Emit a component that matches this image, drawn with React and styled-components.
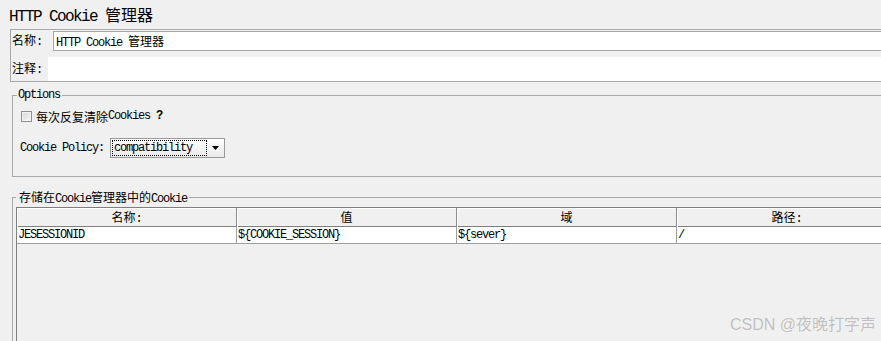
import React from 'react'
import styled, {createGlobalStyle} from 'styled-components';

const GlobalStyle = createGlobalStyle`
    html, body {
        margin: 0;
        padding: 0;
        background: #f0f0f0;
        overflow: hidden;
    }
    body {
        font-family: "Liberation Mono", "Noto Sans CJK SC", monospace;
        font-size: 12px;
        letter-spacing: -1.2px;
        color: #000;
    }
`;
const Page = styled.div`
    position: relative;
    width: 881px;
    height: 341px;
    overflow: hidden;
`;
const Han = styled.span`
    font-family: "Noto Sans CJK SC", sans-serif;
    letter-spacing: 0;
`;
const Title = styled.div`
    height: 29px;
    line-height: 29px;
    padding-left: 9px;
    font-size: 16px;
    letter-spacing: -1.6px;
    white-space: pre;
`;
const Panel = styled.div`
    margin-left: 10px;
    border: 1px solid #a8a8a8;
    border-right: none;
    display: flex;
    flex-direction: column;
`;
const FieldRow = styled.div`
    display: flex;
    align-items: center;
    height: ${p => p.h}px;
    margin-top: ${p => p.top}px;
`;
const Label = styled.div`
    width: ${p => p.w}px;
    padding-left: 1px;
    line-height: 16px;
    flex: none;
`;
const TextInput = styled.div`
    flex: 1;
    align-self: stretch;
    background: #fff;
    border: 1px solid #a5a5a5;
    border-right: none;
    padding-left: 2px;
    line-height: 18px;
    white-space: pre;
`;
const Area = styled.div`
    flex: 1;
    align-self: stretch;
    background: #fff;
`;
const Group = styled.fieldset`
    margin: ${p => p.top}px -10px 0 12px;
    padding: ${p => p.pad};
    border: 1px solid #a8a8a8;
    min-width: 0;
    height: ${p => p.h ? p.h + 'px' : 'auto'};
`;
const Legend = styled.legend`
    padding: 0 2px 0 ${p => p.pl}px;
    margin-left: ${p => p.ml}px;
    line-height: 14px;
    height: 14px;
    white-space: pre;
`;
const OptionRow = styled.div`
    display: flex;
    align-items: center;
    height: 20px;
    margin-top: ${p => p.top || 0}px;
    padding-left: ${p => p.pl || 0}px;
    white-space: pre;
`;
const CheckBox = styled.span`
    width: 9px;
    height: 9px;
    border: 1px solid #8e8f8f;
    background: linear-gradient(135deg, #d8d8d8, #f7f7f7);
    box-shadow: inset 0 0 0 1px #f4f4f4;
    margin-right: 4px;
    flex: none;
`;
const Help = styled.span`
    font-weight: bold;
`;
const Select = styled.div`
    display: flex;
    align-items: stretch;
    width: 113px;
    height: 18px;
    margin-left: 6px;
    border: 1px solid #9a9a9a;
    background: linear-gradient(#fdfdfd, #eaeaea);
`;
const SelectValue = styled.div`
    flex: 1;
    margin: 1px 0 1px 1px;
    border: 1px dotted #000;
    padding-left: 1px;
    line-height: 14px;
`;
const Arrow = styled.div`
    width: 17px;
    display: flex;
    align-items: center;
    justify-content: center;
`;
const Table = styled.div`
    width: 900px;
    height: 200px;
    border-left: 1px solid #7f7f7f;
    border-top: 1px solid #7f7f7f;
`;
const Row = styled.div`
    display: grid;
    grid-template-columns: repeat(4, 220px);
    height: ${p => p.h}px;
    background: ${p => p.head ? '#f0f0f0' : '#fff'};
    border-bottom: 1px solid ${p => p.head ? '#7f7f7f' : '#a0a0a0'};
`;
const HeadCell = styled.div`
    border-right: 1px solid #8c8c8c;
    box-shadow: inset 1px 1px 0 #fff;
    text-align: center;
    line-height: 18px;
`;
const Cell = styled.div`
    border-right: 1px solid #a0a0a0;
    padding-left: 1px;
    line-height: 16px;
    white-space: pre;
`;
const Watermark = styled.div`
    position: absolute;
    right: 5px;
    bottom: 6px;
    font-family: "Liberation Sans", "Noto Sans CJK SC", sans-serif;
    font-size: 16px;
    letter-spacing: 0;
    color: rgba(140, 140, 140, 0.55);
    text-shadow: 0 0 1px rgba(255, 255, 255, 0.8);
`;

const headers = [['名称', ':'], ['值', ''], ['域', ''], ['路径', ':']];
const cookies = [['JESESSIONID', '${COOKIE_SESSION}', '${sever}', '/']];

function App() {
    return (
        <Page>
            <GlobalStyle/>
            <Title>HTTP Cookie <Han>管理器</Han></Title>
            <Panel>
                <FieldRow h={20} top={1}>
                    <Label w={41}><Han>名称</Han>:</Label>
                    <TextInput>HTTP Cookie <Han>管理器</Han></TextInput>
                </FieldRow>
                <FieldRow h={24} top={6}>
                    <Label w={36}><Han>注释</Han>:</Label>
                    <Area/>
                </FieldRow>
            </Panel>
            <Group top={6} pad="4px 0 18px 7px">
                <Legend ml={-3} pl={1}>Options</Legend>
                <OptionRow pl={1}>
                    <CheckBox/>
                    <Han>每次反复清除</Han>Cookies <Help>?</Help>
                </OptionRow>
                <OptionRow top={12}>
                    Cookie Policy:
                    <Select>
                        <SelectValue>compatibility</SelectValue>
                        <Arrow>
                            <svg width="7" height="4" viewBox="0 0 7 4">
                                <path d="M0 0 H7 L3.5 4 Z" fill="#000"/>
                            </svg>
                        </Arrow>
                    </Select>
                </OptionRow>
            </Group>
            <Group top={13} pad="3px 0 0 3px" h={180}>
                <Legend ml={0} pl={3}><Han>存储在</Han>Cookie<Han>管理器中的</Han>Cookie</Legend>
                <Table>
                    <Row head h={18}>
                        {headers.map(([h, c]) => (
                            <HeadCell key={h}><Han>{h}</Han>{c}</HeadCell>
                        ))}
                    </Row>
                    {cookies.map(row => (
                        <Row h={16} key={row[0]}>
                            {row.map((v, i) => <Cell key={i}>{v}</Cell>)}
                        </Row>
                    ))}
                </Table>
            </Group>
            <Watermark>CSDN @夜晚打字声</Watermark>
        </Page>
    )
}

export default App
